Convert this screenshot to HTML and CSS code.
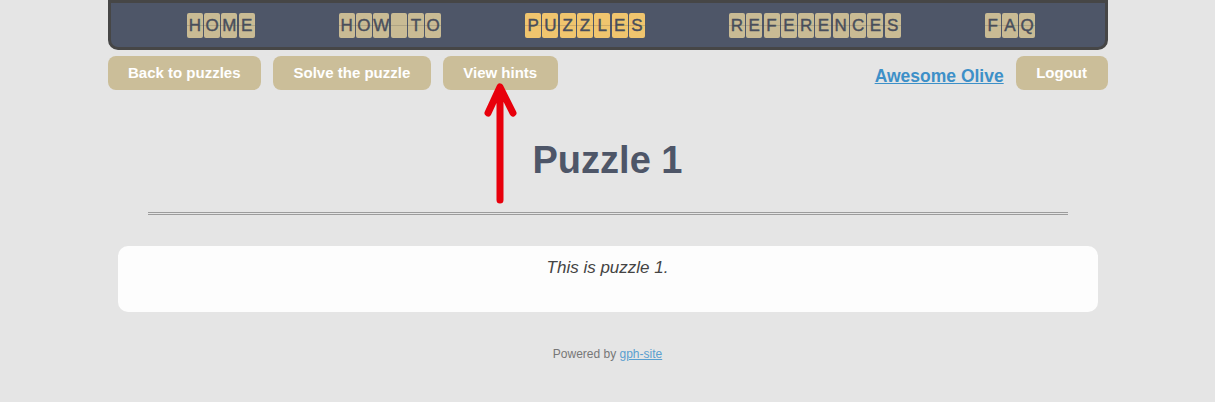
FILE: index.html
```html
<!DOCTYPE html>
<html lang="en">
<head>
    <meta charset="UTF-8">
    <title>Puzzle 1</title>
    <link rel="stylesheet" href="styles.css">
</head>
<body>
    <div class="container">
        <!-- top navigation -->
        <nav class="nav">
            <a class="word" href="#"><span>H</span><span>O</span><span>M</span><span>E</span></a>
            <a class="word" href="#"><span>H</span><span>O</span><span>W</span><span></span><span>T</span><span>O</span></a>
            <a class="word active" href="#"><span>P</span><span>U</span><span>Z</span><span>Z</span><span>L</span><span>E</span><span>S</span></a>
            <a class="word" href="#"><span>R</span><span>E</span><span>F</span><span>E</span><span>R</span><span>E</span><span>N</span><span>C</span><span>E</span><span>S</span></a>
            <a class="word" href="#"><span>F</span><span>A</span><span>Q</span></a>
        </nav>

        <div class="toolbar">
            <div class="btn-group">
                <a class="btn" href="#">Back to puzzles</a>
                <a class="btn" href="#">Solve the puzzle</a>
                <a class="btn" href="#">View hints</a>
            </div>
            <div class="btn-group">
                <a class="team" href="#">Awesome Olive</a>
                <a class="btn" href="#">Logout</a>
            </div>
        </div>

        <h1 class="title">Puzzle 1</h1>
        <hr class="divider">

        <div class="puzzle-box">
            <p>This is puzzle 1.</p>
        </div>

        <footer class="footer">Powered by <a href="#">gph-site</a></footer>

        <!-- annotation arrow -->
        <svg class="arrow" width="40" height="130" viewBox="0 0 40 130">
            <path d="M16 120 L16 8 M4 33 L16 7 L29 33" fill="none" stroke="#e8000c" stroke-width="7" stroke-linecap="round" stroke-linejoin="round"/>
        </svg>
    </div>
</body>
</html>
```

FILE: styles.css
```css
* {
    margin: 0;
    padding: 0;
    box-sizing: border-box;
}

body {
    background: #e5e5e5;
    font-family: 'Liberation Sans', Arial, sans-serif;
    color: #444;
}

.container {
    position: relative;
    width: 1000px;
    margin: 0 auto;
}

/* 导航栏 */
.nav {
    height: 50px;
    background: #4e5668;
    border: 3px solid #464646;
    border-radius: 0 0 10px 10px;
    display: flex;
    justify-content: center;
    align-items: center;
    gap: 84px;
    padding-left: 7px;
}

.word {
    position: relative;
    display: flex;
    gap: 1.3px;
    text-decoration: none;
}

.word span {
    width: 16px;
    height: 25px;
    background: #c9bb94;
    border-radius: 2px;
    color: #484e5c;
    font-size: 17px;
    line-height: 25px;
    text-align: center;
    -webkit-text-stroke: 0.4px #484e5c;
}

.word.active span {
    background: #f0c56e;
}

.word::after {
    content: "";
    position: absolute;
    left: 0;
    right: 0;
    top: 12px;
    height: 1px;
    background: rgba(70, 70, 70, 0.2);
}

/* 按钮行 */
.toolbar {
    display: flex;
    justify-content: space-between;
    align-items: center;
    margin-top: 6px;
}

.btn-group {
    display: flex;
    align-items: center;
    gap: 12px;
}

.btn {
    display: block;
    height: 34px;
    line-height: 34px;
    padding: 0 20.5px;
    background: #cbbe99;
    border-radius: 8px;
    color: #fff;
    font-weight: bold;
    font-size: 15px;
    text-decoration: none;
}

.team {
    color: #3d90c8;
    font-weight: bold;
    font-size: 17.5px;
    margin-top: 6px;
}

.title {
    margin-top: 46px;
    text-align: center;
    font-size: 38px;
    line-height: 48px;
    color: #4e5668;
}

.divider {
    margin: 28px 40px 0;
    height: 3px;
    border: none;
    border-top: 1px solid #9c9c9c;
    border-bottom: 1px solid #9c9c9c;
}

.puzzle-box {
    margin: 31px 10px 0;
    height: 66px;
    padding: 12px 20px;
    background: #fdfdfd;
    border-radius: 10px;
    text-align: center;
    font-style: italic;
    font-size: 17px;
    line-height: 20px;
    color: #444;
}

.footer {
    margin-top: 35px;
    text-align: center;
    font-size: 12px;
    line-height: 14px;
    color: #777;
}

.footer a {
    color: #5a9fd0;
}

.arrow {
    position: absolute;
    left: 376px;
    top: 80px;
}
```
